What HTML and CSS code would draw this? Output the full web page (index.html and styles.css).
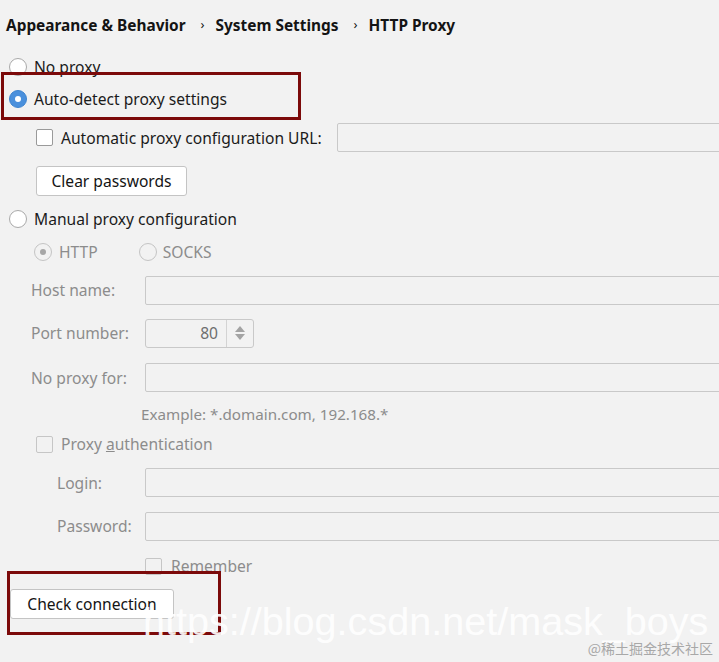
FILE: index.html
```html
<!DOCTYPE html>
<html>
<head>
<meta charset="utf-8">
<link rel="stylesheet" href="styles.css">
</head>
<body>
<div class="page">
  <div class="crumbs">
    <span>Appearance &amp; Behavior</span><span class="sep">›</span><span>System Settings</span><span class="sep">›</span><span>HTTP Proxy</span>
  </div>

  <div class="row h-noproxy"><span class="radio"></span><span class="label">No proxy</span></div>
  <div class="row h-auto"><span class="radio checked"></span><span class="label">Auto-detect proxy settings</span></div>
  <div class="row h-url indent">
    <span class="check"></span><span class="label">Automatic proxy configuration URL:</span>
    <span class="input url"></span>
  </div>
  <div class="row h-clear indent"><button class="btn">Clear passwords</button></div>
  <div class="row h-manual"><span class="radio"></span><span class="label">Manual proxy configuration</span></div>

  <div class="row h-type type">
    <span class="radio dis checked"></span><span class="label dim">HTTP</span>
    <span class="radio dis socks"></span><span class="label dim">SOCKS</span>
  </div>
  <div class="row h-host field"><span class="flabel dim">Host name:</span><span class="input wide"></span></div>
  <div class="row h-port field">
    <span class="flabel dim">Port number:</span>
    <span class="spin"><span class="spin-val">80</span><span class="spin-arrows"><span class="up"></span><span class="down"></span></span></span>
  </div>
  <div class="row h-nofor field"><span class="flabel dim">No proxy for:</span><span class="input wide"></span></div>
  <div class="row h-example"><span class="example dim">Example: *.domain.com, 192.168.*</span></div>
  <div class="row h-auth indent"><span class="check dis"></span><span class="label dim">Proxy <u>a</u>uthentication</span></div>
  <div class="row h-login field sub"><span class="flabel dim">Login:</span><span class="input wide"></span></div>
  <div class="row h-pass field sub"><span class="flabel dim">Password:</span><span class="input wide"></span></div>
  <div class="row h-remember remember"><span class="check dis"></span><span class="label dim">Remember</span></div>
  <div class="row h-checkconn"><button class="btn checkbtn">Check connection</button></div>

  <div class="mark box1"></div>
  <div class="mark box2"></div>
  <div class="watermark">https://blog.csdn.net/mask_boys</div>
  <div class="credit">@稀土掘金技术社区</div>
</div>
</body>
</html>
```

FILE: styles.css
```css
html, body {
  margin: 0;
  padding: 0;
  background: #f2f2f2;
  overflow: hidden;
}
.page {
  position: relative;
  width: 719px;
  height: 662px;
  font-family: "Noto Sans", "Open Sans", sans-serif;
  font-size: 15.6px;
  color: #1b1b1b;
  display: flex;
  flex-direction: column;
}
.crumbs {
  height: 51px;
  display: flex;
  align-items: center;
  padding-left: 6px;
  font-weight: bold;
  font-size: 15.4px;
  color: #141414;
}
.crumbs .sep {
  font-weight: normal;
  font-size: 13px;
  margin: 0 11px 0 15px;
  position: relative;
  top: -2px;
}
.row {
  display: flex;
  align-items: center;
  flex-shrink: 0;
}
.h-noproxy { height: 31px; }
.h-auto { height: 34px; }
.h-url { height: 43px; }
.h-clear { height: 43px; }
.h-manual { height: 33px; }
.h-type { height: 34px; }
.h-host { height: 42px; }
.h-port { height: 44px; }
.h-nofor { height: 45px; }
.h-example { height: 27px; }
.h-auth { height: 34px; }
.h-login { height: 43px; }
.h-pass { height: 44px; }
.h-remember { height: 36px; }
.h-checkconn { height: 39px; }

.radio {
  width: 16px;
  height: 16px;
  border: 1px solid #a9a9a9;
  border-radius: 50%;
  background: #fff;
  margin-left: 9px;
  margin-right: 7px;
  box-sizing: content-box;
  position: relative;
  flex-shrink: 0;
}
.radio.checked {
  background: #4a90dc;
  border-color: #3d84d0;
}
.radio.checked::after {
  content: "";
  position: absolute;
  left: 5px;
  top: 5px;
  width: 6px;
  height: 6px;
  border-radius: 50%;
  background: #fff;
}
.radio.dis {
  background: #f2f2f2;
  border-color: #c4c4c4;
}
.radio.dis.checked::after {
  background: #a6a6a6;
}
.label { white-space: nowrap; }
.dim { color: #8c8c8c; }

.indent { padding-left: 36px; }
.check {
  width: 15px;
  height: 15px;
  border: 1px solid #9a9a9a;
  border-radius: 2px;
  background: #fff;
  margin-right: 8px;
  flex-shrink: 0;
}
.check.dis {
  background: #f2f2f2;
  border-color: #c6c6c6;
}
.input {
  height: 27px;
  border: 1px solid #c9c9c9;
  border-radius: 2px;
  background: #f2f2f2;
  flex: 1;
  margin-right: -10px;
}
.url { margin-left: 15px; }

.btn {
  font: inherit;
  color: #141414;
  height: 30px;
  padding: 0 10px;
  background: #fff;
  border: 1px solid #c4c4c4;
  border-radius: 3px;
}
.h-clear .btn { width: 151px; }

.type { padding-left: 25px; }
.type .socks { margin-left: 41px; margin-right: 6px; }

.field { padding-left: 31px; }
.field .flabel { width: 114px; flex-shrink: 0; }
.field.sub { padding-left: 57px; }
.field.sub .flabel { width: 88px; }

.spin {
  display: flex;
  width: 107px;
  height: 27px;
  border: 1px solid #c9c9c9;
  border-radius: 3px;
}
.spin-val {
  flex: 1;
  text-align: right;
  padding-right: 8px;
  line-height: 27px;
  color: #6e6e6e;
  border-right: 1px solid #d3d3d3;
}
.spin-arrows {
  width: 26px;
  display: flex;
  flex-direction: column;
  align-items: center;
  justify-content: center;
  gap: 2px;
}
.up {
  width: 0; height: 0;
  border-left: 5px solid transparent;
  border-right: 5px solid transparent;
  border-bottom: 6px solid #a3a3a3;
}
.down {
  width: 0; height: 0;
  border-left: 5px solid transparent;
  border-right: 5px solid transparent;
  border-top: 6px solid #a3a3a3;
}
.example { font-size: 15.2px; }
.h-example { padding-left: 141px; }
.remember { padding-left: 145px; }
.remember .check { margin-right: 9px; }
.h-checkconn { padding-left: 10px; }
.checkbtn { width: 164px; }

.mark {
  position: absolute;
  border: 3px solid #7c0a0a;
  box-sizing: border-box;
}
.box1 { left: 1px; top: 72px; width: 300px; height: 48px; }
.box2 { left: 7px; top: 571px; width: 214px; height: 64px; }

.watermark {
  position: absolute;
  left: 143px;
  top: 599px;
  font-family: "Liberation Sans", Arial, sans-serif;
  font-size: 39.6px;
  color: rgba(255,255,255,0.92);
  white-space: nowrap;
}
.credit {
  position: absolute;
  right: 6px;
  top: 638px;
  font-family: "Noto Sans CJK SC", sans-serif;
  font-size: 14px;
  color: #a8a8a8;
  white-space: nowrap;
}
```
